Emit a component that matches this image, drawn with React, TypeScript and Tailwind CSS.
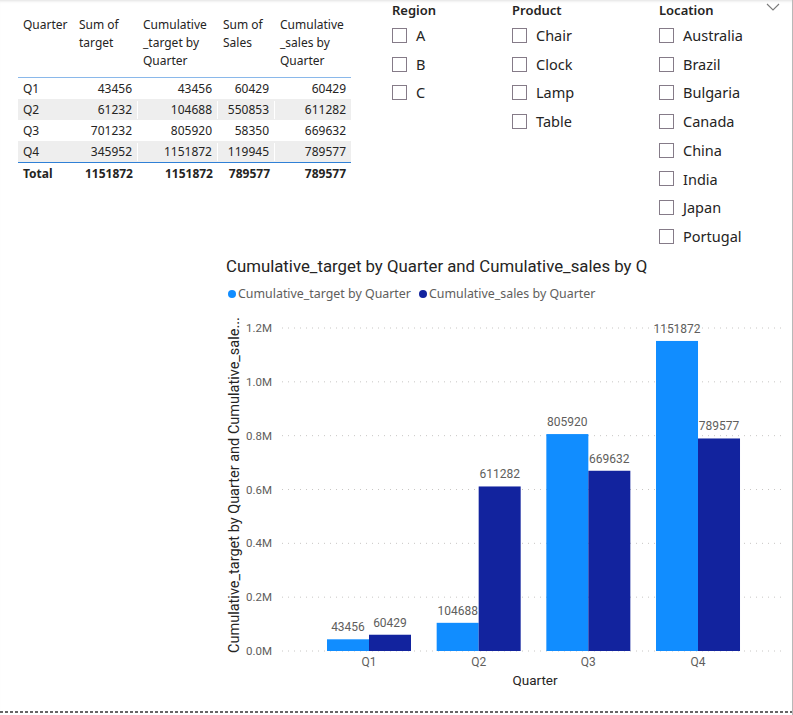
import React from 'react';

type Row = { q: string; target: number; cumTarget: number; sales: number; cumSales: number };

const rows: Row[] = [
  { q: 'Q1', target: 43456, cumTarget: 43456, sales: 60429, cumSales: 60429 },
  { q: 'Q2', target: 61232, cumTarget: 104688, sales: 550853, cumSales: 611282 },
  { q: 'Q3', target: 701232, cumTarget: 805920, sales: 58350, cumSales: 669632 },
  { q: 'Q4', target: 345952, cumTarget: 1151872, sales: 119945, cumSales: 789577 },
];

const cols = 'grid grid-cols-[57px_63px_80px_57px_76px]';

const DataTable: React.FC = () => (
  <div className="w-[333px] text-[12px] text-[#252423] font-['Noto_Sans',sans-serif]">
    <div className={`${cols} leading-[18px] pt-px pb-[7px] border-b border-[#8ab8ea]`}>
      <div className="px-[5px]">Quarter</div>
      <div className="px-[4px]">Sum of target</div>
      <div className="px-[5px]">Cumulative _target by Quarter</div>
      <div className="px-[5px]">Sum of Sales</div>
      <div className="px-[5px]">Cumulative _sales by Quarter</div>
    </div>
    {rows.map((r, i) => (
      <div key={r.q} className={`${cols} h-[21px] items-center ${i % 2 ? 'bg-[#eeeeee]' : ''}`}>
        <div className="px-[5px]">{r.q}</div>
        <div className="px-[5px] text-right border-r border-white">{r.target}</div>
        <div className="px-[5px] text-right border-r border-white">{r.cumTarget}</div>
        <div className="px-[5px] text-right border-r border-white">{r.sales}</div>
        <div className="px-[5px] text-right">{r.cumSales}</div>
      </div>
    ))}
    <div className={`${cols} h-[23px] items-center font-bold border-t border-[#2f80d6]`}>
      <div className="px-[5px]">Total</div>
      <div className="px-[5px] text-right">1151872</div>
      <div className="px-[5px] text-right">1151872</div>
      <div className="px-[5px] text-right">789577</div>
      <div className="px-[5px] text-right">789577</div>
    </div>
  </div>
);

const Slicer: React.FC<{ title: string; items: string[]; width?: string; chevron?: boolean }> = ({ title, items, width, chevron }) => (
  <div className={`${width ?? 'flex-1'} font-['Noto_Sans',sans-serif] text-[#252423]`}>
    <div className="h-[21px] flex items-center justify-between">
      <span className="text-[13px] font-semibold">{title}</span>
      {chevron && (
        <svg width="14" height="8" viewBox="0 0 14 8" className="mr-[12px] -mt-[8px]">
          <path d="M1 1 L7 7 L13 1" fill="none" stroke="#7a7a7a" strokeWidth="1.1" />
        </svg>
      )}
    </div>
    {items.map((it) => (
      <div key={it} className="h-[28.7px] flex items-center gap-[9px]">
        <div className="w-[15px] h-[15px] border border-[#857b88] bg-white" />
        <span className="text-[14.5px] leading-none">{it}</span>
      </div>
    ))}
  </div>
);

const data = [
  { q: 'Q1', t: 43456, s: 60429 },
  { q: 'Q2', t: 104688, s: 611282 },
  { q: 'Q3', t: 805920, s: 669632 },
  { q: 'Q4', t: 1151872, s: 789577 },
];

const base = 341;
const perM = 323 / 1.2;
const ticks = [1.2, 1.0, 0.8, 0.6, 0.4, 0.2, 0.0];
const yOf = (v: number) => base - (v / 1e6) * perM;

const BarChart: React.FC = () => (
  <svg width="570" height="390" viewBox="0 0 570 390" fontFamily="Roboto, 'Noto Sans', sans-serif">
    <text
      x="14"
      y="175"
      transform="rotate(-90 14 175)"
      textAnchor="middle"
      dominantBaseline="central"
      fontSize="14.5"
      fill="#252423"
    >
      Cumulative_target by Quarter and Cumulative_sale...
    </text>
    {ticks.map((t) => (
      <g key={t}>
        <line x1="62" x2="566" y1={yOf(t * 1e6)} y2={yOf(t * 1e6)} stroke="#c8c6c4" strokeDasharray="1 5" />
        <text x="52" y={yOf(t * 1e6)} textAnchor="end" dominantBaseline="central" fontSize="11.5" fill="#605e5c">
          {t.toFixed(1)}M
        </text>
      </g>
    ))}
    {data.map((d, i) => {
      const c = 149 + i * 109.67;
      const ty = yOf(d.t);
      const sy = yOf(d.s);
      return (
        <g key={d.q}>
          <rect x={c - 42} y={ty} width="42" height={base - ty} fill="#118dff" />
          <rect x={c} y={sy} width="42" height={base - sy} fill="#12239e" />
          <text x={c - 21} y={ty - 12} textAnchor="middle" dominantBaseline="central" fontSize="12" fill="#605e5c">
            {d.t}
          </text>
          <text x={c + 21} y={sy - 12} textAnchor="middle" dominantBaseline="central" fontSize="12" fill="#605e5c">
            {d.s}
          </text>
          <text x={c} y="352" textAnchor="middle" dominantBaseline="central" fontSize="12" fill="#605e5c">
            {d.q}
          </text>
        </g>
      );
    })}
    <text x="315" y="370" textAnchor="middle" dominantBaseline="central" fontSize="13.5" fill="#252423">
      Quarter
    </text>
  </svg>
);

const LegendItem: React.FC<{ color: string; label: string }> = ({ color, label }) => (
  <div className="flex items-center gap-[2px]">
    <span className={`w-[8px] h-[8px] rounded-full ${color}`} />
    <span>{label}</span>
  </div>
);

export default function App() {
  return (
    <div className="w-[793px] h-[715px] bg-white border-r border-[#b8b8b8] flex flex-col shadow-[inset_0_3px_3px_-2px_rgba(0,0,0,0.12)] overflow-hidden">
      <div className="h-[250px] flex shrink-0">
        <div className="ml-[18px] mt-[15px]">
          <DataTable />
        </div>
        <div className="ml-[41px] flex flex-1">
          <Slicer title="Region" items={['A', 'B', 'C']} width="w-[120px]" />
          <Slicer title="Product" items={['Chair', 'Clock', 'Lamp', 'Table']} width="w-[147px]" />
          <Slicer
            title="Location"
            items={['Australia', 'Brazil', 'Bulgaria', 'Canada', 'China', 'India', 'Japan', 'Portugal']}
            chevron
          />
        </div>
      </div>
      <div className="ml-[220px] w-[570px] flex flex-col">
        <div className="h-[20px] mt-[7px] pl-[6px] flex items-center text-[16.8px] text-[#252423] font-['Roboto',sans-serif] whitespace-nowrap">
          Cumulative_target by Quarter and Cumulative_sales by Q
        </div>
        <div className="h-[16px] mt-[9px] pl-[8px] flex items-center gap-[8px] text-[12.4px] text-[#605e5c] font-['Noto_Sans',sans-serif]">
          <LegendItem color="bg-[#118dff]" label="Cumulative_target by Quarter" />
          <LegendItem color="bg-[#12239e]" label="Cumulative_sales by Quarter" />
        </div>
        <div className="mt-[8px]">
          <BarChart />
        </div>
      </div>
      <div className="mt-auto mb-[2px] h-[2px] bg-[repeating-linear-gradient(to_right,#666666_0_3px,transparent_3px_5px)]" />
    </div>
  );
}
